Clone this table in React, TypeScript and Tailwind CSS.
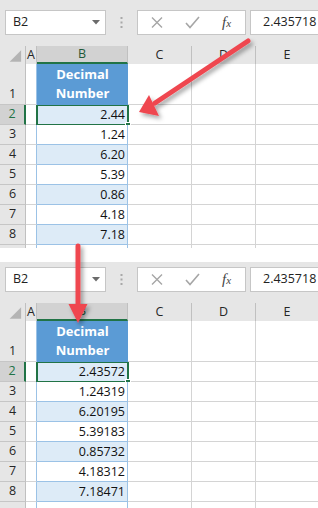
import React from "react";

type SheetProps = {
  values: string[];
  topPad: number;
  tailHeight: number;
};

function Toolbar({ topPad }: { topPad: number }) {
  return (
    <div className={`flex items-start bg-[#e6e6e6] ${topPad === 10 ? "h-[46px] pt-[10px]" : "h-[41px] pt-[5px]"}`}>
      <div className="ml-[5px] flex h-[25px] w-[101px] items-center justify-between border border-[#c6c6c6] bg-white pl-[7px] pr-[5px] text-[12.5px] text-[#222]">
        <span>B2</span>
        <svg width="8" height="5" viewBox="0 0 8 5">
          <path d="M0 0 L8 0 L4 4.5 Z" fill="#6b6b6b" />
        </svg>
      </div>
      <div className="flex h-[25px] w-[31px] items-center justify-center">
        <svg width="3" height="11" viewBox="0 0 3 11">
          <rect x="0.5" y="0" width="2" height="2" fill="#a8a8a8" />
          <rect x="0.5" y="4.5" width="2" height="2" fill="#a8a8a8" />
          <rect x="0.5" y="9" width="2" height="2" fill="#a8a8a8" />
        </svg>
      </div>
      <div className="flex h-[25px] w-[109px] items-center border border-[#c6c6c6] bg-white">
        <svg className="ml-[13px]" width="12" height="11" viewBox="0 0 12 11">
          <path d="M1 0.5 L11 10.5 M11 0.5 L1 10.5" stroke="#a6a6a6" strokeWidth="1.4" />
        </svg>
        <svg className="ml-[22px]" width="15" height="13" viewBox="0 0 15 13">
          <path d="M1 7 L5 11.5 L14 1" stroke="#a6a6a6" strokeWidth="1.6" fill="none" />
        </svg>
        <span className="ml-[22px] font-['Liberation_Serif',serif] text-[15px] italic leading-none text-[#444]">
          f<span className="text-[11px]">x</span>
        </span>
      </div>
      <div className="ml-[4px] flex h-[25px] flex-1 items-center border border-r-0 border-[#c6c6c6] bg-white pl-[12px] text-[12.5px] text-[#222]">
        2.435718
      </div>
    </div>
  );
}

function HeaderRow() {
  return (
    <div className="flex h-[18px] bg-[#e6e6e6] text-[12.5px] leading-none text-[#262626]">
      <div className="flex w-[26px] items-end border-r border-[#c0c0c0]">
        <svg width="26" height="18" viewBox="0 0 26 18">
          <path d="M10 16 L22 4 L22 16 Z" fill="#b4b4b4" />
        </svg>
      </div>
      <div className="flex w-[11px] items-center justify-center overflow-hidden border-r border-[#c0c0c0]">A</div>
      <div className="flex w-[91px] items-center justify-center border-r border-b-2 border-[#c0c0c0] border-b-[#217346] bg-[#d2d2d2] text-[#1f5a39]">
        B
      </div>
      <div className="flex w-[64px] items-center justify-center border-r border-[#c0c0c0]">C</div>
      <div className="flex w-[64px] items-center justify-center border-r border-[#c0c0c0]">D</div>
      <div className="flex flex-1 items-center justify-center">E</div>
    </div>
  );
}

function DataRow({ num, value, height }: { num: number; value: string; height: string }) {
  const selected = num === 2;
  const shaded = num % 2 === 0;
  return (
    <div className={`flex ${height} overflow-hidden text-[12.5px] leading-none`}>
      <div
        className={`flex w-[26px] items-end justify-center border-b border-[#c6c6c6] pb-[4px] ${
          selected ? "border-r-2 border-r-[#217346] bg-[#d2d2d2] text-[#217346]" : "border-r border-r-[#c0c0c0] bg-[#e6e6e6] text-[#262626]"
        }`}
      >
        {num}
      </div>
      <div className="w-[11px] border-b border-r border-[#d4d4d4] border-r-[#9bc2e6]" />
      {num === 1 ? (
        <div className="flex w-[91px] flex-col items-center justify-end bg-[#5b9bd5] pb-[2px] text-[13px] font-bold leading-[19px] text-white">
          <span>Decimal</span>
          <span>Number</span>
        </div>
      ) : (
        <div
          className={`relative flex w-[91px] items-end justify-end border-b border-r border-[#9bc2e6] pb-[3px] pr-[2px] text-[#111] ${
            shaded ? "bg-[#ddebf7]" : "bg-white"
          }`}
        >
          {value}
          {selected && (
            <div className="absolute -left-[1px] -top-[1px] h-[22px] w-[93px] border-2 border-[#217346]">
              <div className="absolute -bottom-[4px] -right-[4px] h-[6px] w-[6px] border border-white bg-[#217346]" />
            </div>
          )}
        </div>
      )}
      <div className="w-[64px] border-b border-r border-[#d4d4d4]" />
      <div className="w-[64px] border-b border-r border-[#d4d4d4]" />
      <div className="flex-1 border-b border-[#d4d4d4]" />
    </div>
  );
}

function Sheet({ values, topPad, tailHeight }: SheetProps) {
  return (
    <div className="flex flex-col">
      <Toolbar topPad={topPad} />
      <HeaderRow />
      <DataRow num={1} value="" height="h-[41px]" />
      {values.map((v, i) => (
        <DataRow key={i} num={i + 2} value={v} height="h-[20px]" />
      ))}
      <div className={`flex ${tailHeight === 3 ? "h-[3px]" : "h-[6px]"}`}>
        <div className="w-[26px] border-r border-[#c0c0c0] bg-[#e6e6e6]" />
        <div className="w-[11px] border-r border-[#9bc2e6]" />
        <div className="w-[91px] border-r border-[#9bc2e6]" />
        <div className="w-[64px] border-r border-[#d4d4d4]" />
        <div className="w-[64px] border-r border-[#d4d4d4]" />
        <div className="flex-1" />
      </div>
    </div>
  );
}

export default function App() {
  const rounded = ["2.44", "1.24", "6.20", "5.39", "0.86", "4.18", "7.18"];
  const full = ["2.43572", "1.24319", "6.20195", "5.39183", "0.85732", "4.18312", "7.18471"];

  return (
    <div className="relative h-[508px] w-[318px] overflow-hidden bg-white font-['Open_Sans',sans-serif]">
      <Sheet values={rounded} topPad={10} tailHeight={3} />
      <div className="h-[14px]" />
      <Sheet values={full} topPad={5} tailHeight={6} />

      {/* arrows drawn over the sheets */}
      <svg className="pointer-events-none absolute inset-0" width="318" height="508" viewBox="0 0 318 508">
        <defs>
          <filter id="shadow" x="-20%" y="-20%" width="140%" height="140%">
            <feDropShadow dx="2.5" dy="3" stdDeviation="2" floodColor="#000" floodOpacity="0.35" />
          </filter>
        </defs>
        <g filter="url(#shadow)">
          <line x1="248" y1="41" x2="155" y2="103" stroke="#ef4650" strokeWidth="5" strokeLinecap="round" />
          <path d="M139 112 L149 95 L159 116 Z" fill="#ef4650" />
          <line x1="78" y1="246" x2="78" y2="306" stroke="#ef4650" strokeWidth="5" strokeLinecap="round" />
          <path d="M78 323 L68.5 304 L87.5 304 Z" fill="#ef4650" />
        </g>
      </svg>
    </div>
  );
}
